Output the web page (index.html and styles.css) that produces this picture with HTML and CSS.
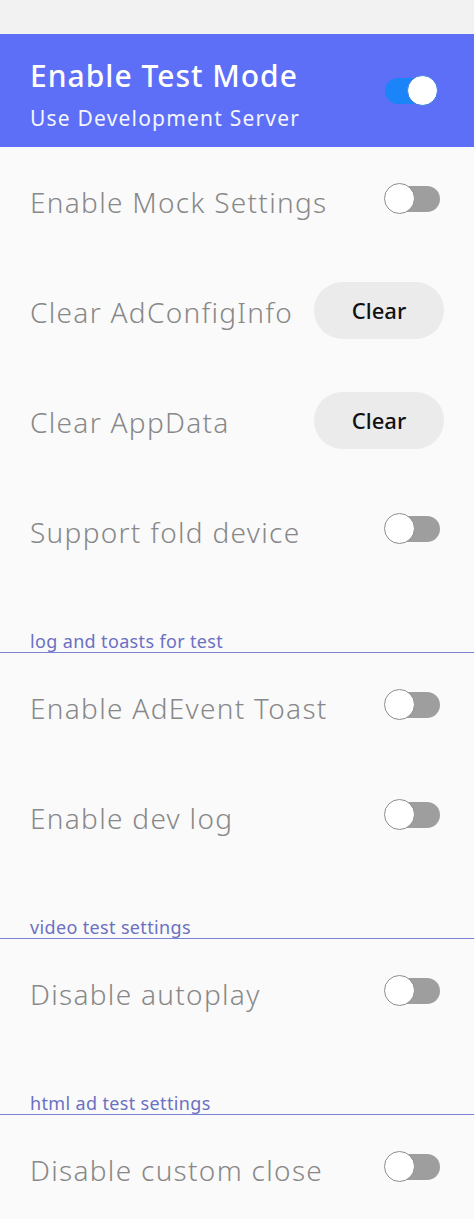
FILE: index.html
```html
<!DOCTYPE html>
<html>
<head>
    <title>Test Settings</title>
    <link rel="stylesheet" href="styles.css">
</head>
<body>
    <div class="status-bar"></div>

    <div class="header">
        <div class="header-text">
            <div class="header-title">Enable Test Mode</div>
            <div class="header-sub">Use Development Server</div>
        </div>
        <div class="switch on"><span class="thumb"></span></div>
    </div>

    <div class="list">
        <div class="row">
            <span class="row-label">Enable Mock Settings</span>
            <div class="switch"><span class="thumb"></span></div>
        </div>
        <div class="row">
            <span class="row-label">Clear AdConfigInfo</span>
            <button class="btn">Clear</button>
        </div>
        <div class="row">
            <span class="row-label">Clear AppData</span>
            <button class="btn">Clear</button>
        </div>
        <div class="row">
            <span class="row-label">Support fold device</span>
            <div class="switch"><span class="thumb"></span></div>
        </div>

        <div class="section-label">log and toasts for test</div>
        <div class="row">
            <span class="row-label">Enable AdEvent Toast</span>
            <div class="switch"><span class="thumb"></span></div>
        </div>
        <div class="row">
            <span class="row-label">Enable dev log</span>
            <div class="switch"><span class="thumb"></span></div>
        </div>

        <div class="section-label">video test settings</div>
        <div class="row">
            <span class="row-label">Disable autoplay</span>
            <div class="switch"><span class="thumb"></span></div>
        </div>

        <div class="section-label">html ad test settings</div>
        <div class="row">
            <span class="row-label">Disable custom close</span>
            <div class="switch"><span class="thumb"></span></div>
        </div>
    </div>
</body>
</html>
```

FILE: styles.css
```css
body {
    margin: 0;
    font-family: "Noto Sans", sans-serif;
    background: #fafafa;
    overflow: hidden;
}

.status-bar {
    height: 34px;
    background: #f2f2f2;
}

.header {
    height: 113px;
    box-sizing: border-box;
    padding: 8px 34px 0 30px;
    background: #5d6ff6;
    display: flex;
    align-items: center;
    justify-content: space-between;
}

.header-title {
    color: #fff;
    font-size: 30px;
    font-weight: 500;
    letter-spacing: 1px;
    line-height: 38px;
}

.header-sub {
    margin-top: 8px;
    color: #f4f5ff;
    font-size: 21px;
    letter-spacing: 1.2px;
    line-height: 30px;
}

.row {
    height: 110px;
    padding: 0 30px;
    display: flex;
    align-items: center;
    justify-content: space-between;
}

.row-label {
    color: #888;
    font-size: 28px;
    font-weight: 300;
    letter-spacing: 1.3px;
}

.btn {
    width: 130px;
    height: 57px;
    margin-bottom: 4px;
    border: none;
    border-radius: 29px;
    background: #ebebeb;
    color: #111;
    font-family: "Noto Sans", sans-serif;
    font-size: 22px;
    font-weight: 500;
}

/* toggle switch */
.switch {
    position: relative;
    width: 56px;
    height: 32px;
    margin-right: 4px;
    margin-bottom: 6px;
}

.switch::before {
    content: "";
    position: absolute;
    left: 3px;
    right: 0;
    top: 3px;
    height: 26px;
    border-radius: 13px;
    background: #9e9e9e;
}

.switch .thumb {
    position: absolute;
    left: 0;
    top: 0;
    width: 29px;
    height: 29px;
    border-radius: 50%;
    background: #fff;
    border: 1.5px solid #8e8e8e;
}

.header .switch {
    margin-right: 2px;
    margin-bottom: 8px;
}

.switch.on::before {
    background: #1a84f8;
}

.switch.on .thumb {
    left: auto;
    right: 0;
    border-color: #3d7fe0;
}

.section-label {
    height: 66px;
    box-sizing: border-box;
    padding: 0 30px 1px;
    display: flex;
    align-items: flex-end;
    color: #6b70c2;
    font-size: 18px;
    letter-spacing: 0.35px;
    line-height: 20px;
    border-bottom: 1.5px solid #7d82d4;
}
```
